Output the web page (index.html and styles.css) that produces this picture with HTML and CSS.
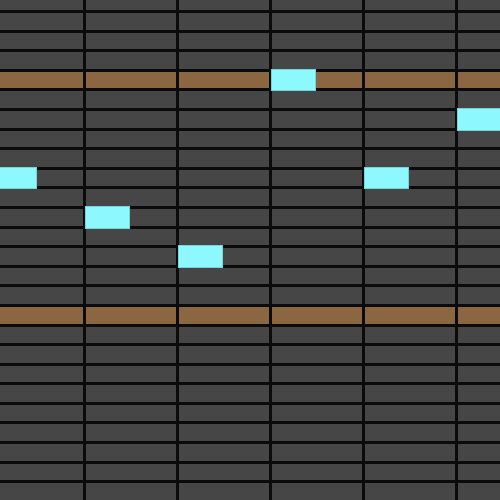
FILE: index.html
```html
<!DOCTYPE html>
<html lang="en">
<head>
    <meta charset="UTF-8">
    <title>Piano Roll</title>
    <link rel="stylesheet" href="styles.css">
</head>
<body>

    <div class="roll">
        <div class="grid" id="grid">
            <!-- Cells are added here -->
        </div>
    </div>

    <script>
        const grid = document.getElementById('grid');
        const ROWS = 26;
        const COLS = 6;
        const accentRows = [4, 16];
        // [row, column] of each note
        const notes = [
            [9, 0],
            [11, 1],
            [13, 2],
            [4, 3],
            [9, 4],
            [6, 5]
        ];

        for (let r = 0; r < ROWS; r++) {
            for (let c = 0; c < COLS; c++) {
                const cell = document.createElement('div');
                cell.className = 'cell';
                if (accentRows.includes(r)) {
                    cell.classList.add('accent');
                }
                if (notes.some(n => n[0] === r && n[1] === c)) {
                    const note = document.createElement('div');
                    note.className = 'note';
                    cell.appendChild(note);
                }
                grid.appendChild(cell);
            }
        }
    </script>

</body>
</html>
```

FILE: styles.css
```css
body {
    margin: 0;
    background-color: #0b0b0b;
}
.roll {
    width: 500px;
    height: 500px;
    overflow: hidden;
    background-color: #0b0b0b;
}
.grid {
    display: grid;
    grid-template-columns: repeat(6, 90px);
    grid-auto-rows: 16.6px;
    gap: 3px 3px;
    margin: -6.6px 0 0 -7px;
}
.cell {
    background-color: #464646;
}
.cell.accent {
    background-color: #8a6740;
}
.note {
    position: relative;
    z-index: 1;
    width: 45px;
    height: 22.6px;
    margin: -3px 0 0 -1.5px;
    box-sizing: border-box;
    background-color: #8ef8ff;
    border: 1px solid #74d6dd;
}
```
